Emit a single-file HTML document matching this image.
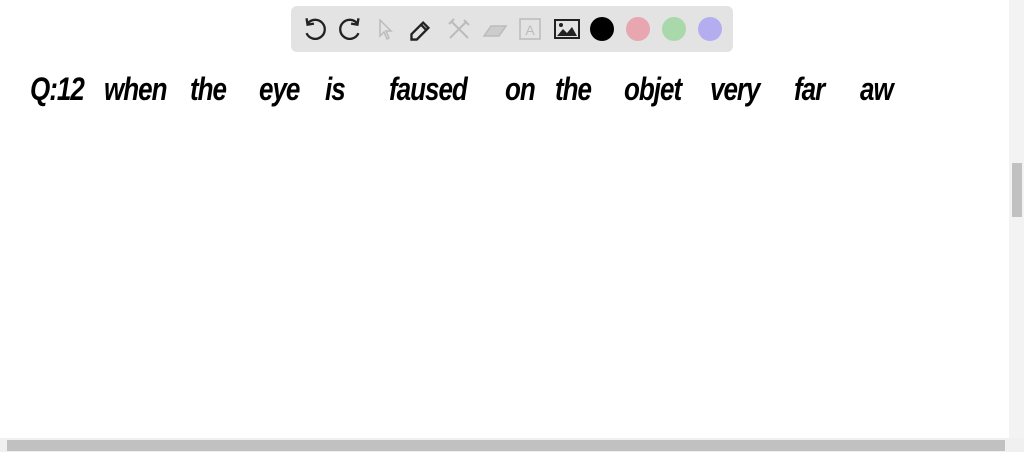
<!DOCTYPE html>
<html><head><meta charset="utf-8"><style>
html,body{margin:0;padding:0;width:1024px;height:452px;overflow:hidden;background:#fff;font-family:"Liberation Sans",sans-serif}
.tb{position:absolute;left:291px;top:6px;width:442px;height:46px;background:#e3e3e3;border-radius:6px}
.ic{position:absolute;top:12px}
.dot{position:absolute;top:17px;width:24px;height:24px;border-radius:50%}
.w{position:absolute;top:70px;font-style:italic;font-weight:bold;font-size:26px;color:#000;transform:scaleY(1.25);transform-origin:left top;letter-spacing:-1px}
.vs{position:absolute;left:1009px;top:0;width:15px;height:438px;background:#f3f3f3}
.vt{position:absolute;left:1012px;top:163px;width:10px;height:54px;background:#c1c1c1}
.hs{position:absolute;left:0;top:438px;width:1024px;height:14px;background:#f0f0f0}
.ht{position:absolute;left:7px;top:440px;width:998px;height:11px;background:#c1c1c1}
</style></head><body>
<div class="tb"></div>
<svg class="ic" style="left:301px" width="28" height="36" viewBox="0 0 26 34"><path d="M6 11 A9 9 0 1 1 5 20" fill="none" stroke="#222" stroke-width="2.2"/><path d="M5 6 L6 12 L12 11" fill="none" stroke="#222" stroke-width="2.2"/></svg>
<svg class="ic" style="left:336px" width="28" height="36" viewBox="0 0 26 34"><path d="M20 11 A9 9 0 1 0 21 20" fill="none" stroke="#222" stroke-width="2.2"/><path d="M21 6 L20 12 L14 11" fill="none" stroke="#222" stroke-width="2.2"/></svg>
<svg class="ic" style="left:375px" width="22" height="34" viewBox="0 0 22 34"><path d="M5 8 L5 24 L9 20 L12 27 L14 26 L11 19 L16 19 Z" fill="none" stroke="#bbb" stroke-width="1.5"/></svg>
<svg class="ic" style="left:407px" width="28" height="36" viewBox="0 0 26 34"><path d="M4 26 L4 21 L15 10 L20 15 L9 26 Z M13 12 L18 17" fill="none" stroke="#222" stroke-width="2.2"/></svg>
<svg class="ic" style="left:446px" width="26" height="34" viewBox="0 0 26 34"><path d="M4 26 L20 10 M6 10 L22 26 M3 12 L8 7 M18 8 L23 13" fill="none" stroke="#bbb" stroke-width="2"/></svg>
<svg class="ic" style="left:481px" width="28" height="34" viewBox="0 0 28 34"><path d="M3 24 L10 14 L25 14 L18 24 Z" fill="#ccc" stroke="#bbb" stroke-width="1.5"/></svg>
<svg class="ic" style="left:518px" width="24" height="34" viewBox="0 0 24 34"><rect x="2" y="7" width="20" height="20" fill="none" stroke="#bbb" stroke-width="1.5"/><text x="12" y="23" font-size="14" text-anchor="middle" fill="#bbb" font-family="Liberation Sans">A</text></svg>
<svg class="ic" style="left:553px" width="28" height="34" viewBox="0 0 28 34"><rect x="2" y="8" width="24" height="18" fill="none" stroke="#222" stroke-width="2"/><circle cx="8" cy="13" r="2" fill="#222"/><path d="M4 24 L10 17 L14 21 L19 15 L24 24 Z" fill="#222"/></svg>
<div class="dot" style="left:590px;background:#000"></div>
<div class="dot" style="left:626px;background:#e8a6b0"></div>
<div class="dot" style="left:662px;background:#a9d8ab"></div>
<div class="dot" style="left:698px;background:#b4aef0"></div>
<span class="w" style="left:30px">Q:12</span>
<span class="w" style="left:104px">when</span>
<span class="w" style="left:190px">the</span>
<span class="w" style="left:259px">eye</span>
<span class="w" style="left:325px">is</span>
<span class="w" style="left:389px">faused</span>
<span class="w" style="left:505px">on</span>
<span class="w" style="left:555px">the</span>
<span class="w" style="left:624px">objet</span>
<span class="w" style="left:710px">very</span>
<span class="w" style="left:794px">far</span>
<span class="w" style="left:860px">aw</span>
<div class="vs"></div><div class="vt"></div>
<div class="hs"></div><div class="ht"></div>
</body></html>
